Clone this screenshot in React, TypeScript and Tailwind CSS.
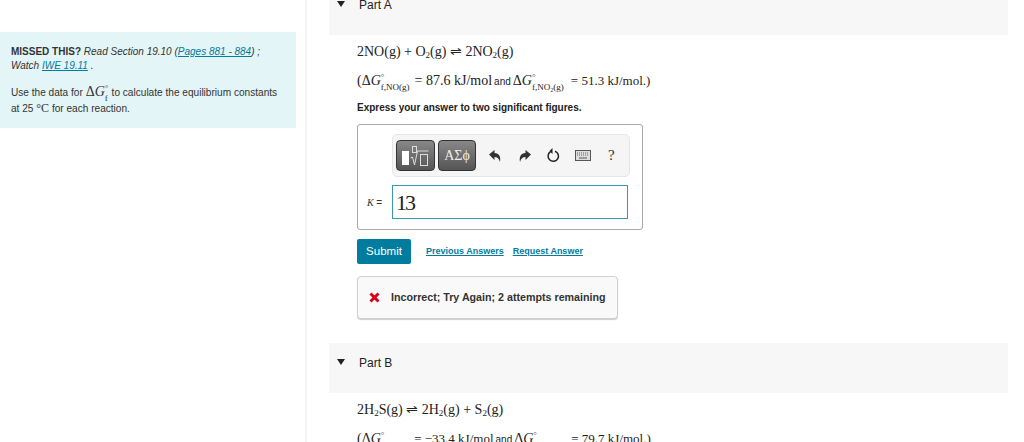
const sans = "font-['Liberation_Sans',Arial,sans-serif]";
const serif = "font-['Liberation_Serif','Times_New_Roman',serif]";

function DeltaG({ sub }: { sub: string }) {
  return (
    <span className={`inline-flex items-baseline leading-none ${serif}`}>
      <span>Δ</span>
      <i>G</i>
      <span className="relative inline-block h-[1px]">
        <span className="absolute left-0 top-[-1px] text-[9px] leading-none text-[#555]">°</span>
        <span className="relative top-[5px] whitespace-nowrap text-[9px] leading-none">{sub}</span>
      </span>
    </span>
  );
}

function PartHeader({ label }: { label: string }) {
  return (
    <div className="flex h-[50px] items-start bg-[#f7f7f7] pt-[10px]">
      <svg className="ml-[8px] mt-[6px] h-[6px] w-[8px]" viewBox="0 0 8 6">
        <path d="M0 0h8L4 6z" fill="#222" />
      </svg>
      <span className={`ml-[14px] text-[12px] leading-[20px] text-[#222] ${sans}`}>{label}</span>
    </div>
  );
}

function Toolbar() {
  return (
    <div className="ml-[34px] flex h-[43px] w-[238px] items-center rounded-[5px] border border-[#e6e6e6] bg-[#f5f5f5] pl-[3px]">
      <div className="flex h-[31px] w-[39px] items-center justify-center gap-[1px] rounded-[4px] border border-[#333] bg-gradient-to-b from-[#888] to-[#555]">
        <div className="mt-[5px] h-[14px] w-[7px] bg-white" />
        <svg width="19" height="22" viewBox="0 0 19 22" fill="none" stroke="#ddd" strokeWidth="1">
          <rect x="2.500" y="1.500" width="4" height="6" />
          <path d="M0.500 13l2 -1 2 8 3-14h11" />
          <rect x="10.500" y="9.500" width="7" height="11" />
        </svg>
      </div>
      <div className={`ml-[3px] flex h-[31px] w-[38px] items-center justify-center rounded-[4px] border border-[#333] bg-gradient-to-b from-[#888] to-[#555] text-[14px] text-[#eee] ${serif}`}>
        ΑΣϕ
      </div>
      <svg className="ml-[13px]" width="12" height="14" viewBox="0 0 12 14">
        <path d="M0 5.500L5.500 1v3c4.500 0 6.500 3.500 5.500 9-1-3.500-2.500-5-5.500-5v3z" fill="#333" />
      </svg>
      <svg className="ml-[18px]" width="12" height="14" viewBox="0 0 12 14">
        <path d="M12 5.500L6.500 1v3C2 4 0 7.500 1 13c1-3.500 2.500-5 5.500-5v3z" fill="#333" />
      </svg>
      <svg className="ml-[16px]" width="13" height="16" viewBox="0 0 13 16" fill="none">
        <path d="M8 3.200A5.200 5.200 0 1 1 3.500 3.700" stroke="#222" strokeWidth="1.500" />
        <path d="M5.500 0v6L2.500 3z" fill="#222" />
      </svg>
      <svg className="ml-[15px]" width="16" height="11" viewBox="0 0 16 11">
        <rect x="0.500" y="0.500" width="15" height="10" fill="#ddd" stroke="#555" />
        <path d="M2 3h12M2 5h12" stroke="#666" strokeDasharray="1 1" />
        <path d="M4 8h8" stroke="#555" />
      </svg>
      <span className={`ml-[17px] text-[15px] text-[#333] ${serif}`}>?</span>
    </div>
  );
}

export default function App() {
  return (
    <div className={`flex h-[442px] w-[1024px] overflow-hidden bg-white ${sans}`}>
      <aside className="w-[307px] shrink-0 border-r-2 border-[#f3f5f7] pt-[32px]">
        <div className="h-[96px] w-[296px] bg-[#e4f5f7] pl-[11px] pt-[13px] text-[10.1px] text-[#333]">
          <p className="leading-[14px]">
            <b className="text-[10px]">MISSED THIS?</b>{" "}
            <i className="text-[10px]">
              Read Section 19.10 (<span className="text-[#007c9e] underline">Pages 881 - 884</span>) ;
              <br />
              Watch <span className="text-[#007c9e] underline">IWE 19.11</span> .
            </i>
          </p>
          <p className="mt-[11px] leading-[16px]">
            Use the data for{" "}
            <span className="text-[14px] leading-none">
              <DeltaG sub="f" />
            </span>{" "}
            <span className="ml-[1px]">to calculate the equilibrium constants</span>
            <br />
            at 25 <span className={`text-[12px] leading-none ${serif}`}>°C</span> for each reaction.
          </p>
        </div>
      </aside>

      <main className="ml-[22px] mt-[-15px] w-[679px] shrink-0">
        <PartHeader label="Part A" />

        <div className="pl-[28px]">
          <p className={`mt-[9px] text-[14px] leading-[16px] text-[#222] ${serif}`}>
            2NO(g) + O<sub className="text-[9px]">2</sub>(g) ⇌ 2NO<sub className="text-[9px]">2</sub>(g)
          </p>
          <p className={`mt-[13px] text-[14px] leading-[16px] text-[#222] ${serif}`}>
            (<DeltaG sub="f,NO(g)" />
            <span className="ml-[5px]">= 87.6 kJ/mol</span>
            <span className={`mx-[2px] text-[10px] ${sans}`}>and</span>
            <DeltaG sub="f,NO₂(g)" />
            <span className="ml-[7px] text-[13px]">= 51.3 kJ/mol.)</span>
          </p>
          <p className="mt-[11px] text-[10px] font-bold leading-[14px] text-[#222]">
            Express your answer to two significant figures.
          </p>

          <div className="mt-[9px] h-[106px] w-[286px] rounded-[3px] border border-[#aaa] pt-[9px]">
            <Toolbar />
            <div className="mt-[8px] flex items-center">
              <span className={`ml-[9px] w-[25px] text-[10px] text-[#333] ${serif}`}>
                <i>K</i> <span className={sans}>=</span>
              </span>
              <div className={`flex h-[34px] w-[236px] items-center border border-[#3b97ad] pl-[3px] text-[22px] tracking-[-2px] text-[#222] ${serif}`}>
                13
              </div>
            </div>
          </div>

          <div className="mt-[9px] flex items-center">
            <div className="flex h-[25px] w-[54px] items-center justify-center rounded-[2px] bg-[#007c9e] text-[11.5px] text-white">
              Submit
            </div>
            <span className="ml-[15px] text-[9px] font-bold text-[#007c9e] underline">Previous Answers</span>
            <span className="ml-[9px] text-[9px] font-bold text-[#007c9e] underline">Request Answer</span>
          </div>

          <div className="mt-[12px] flex h-[43px] w-[261px] items-center rounded-[4px] border border-[#d0d0d0] bg-[#f9f9f9] pl-[11px] shadow-[0_1px_1px_rgba(0,0,0,0.2)]">
            <svg width="11" height="11" viewBox="0 0 11 11">
              <path d="M1.500 1.500l8 8M9.500 1.500l-8 8" stroke="#d9001b" strokeWidth="3" />
            </svg>
            <span className="ml-[11px] text-[10.700px] font-bold text-[#333]">Incorrect; Try Again; 2 attempts remaining</span>
          </div>
        </div>

        <div className="mt-[24px]">
          <PartHeader label="Part B" />
        </div>

        <div className="pl-[28px]">
          <p className={`mt-[9px] text-[14px] leading-[16px] text-[#222] ${serif}`}>
            2H<sub className="text-[9px]">2</sub>S(g) ⇌ 2H<sub className="text-[9px]">2</sub>(g) + S<sub className="text-[9px]">2</sub>(g)
          </p>
          <p className={`mt-[13px] text-[14px] leading-[16px] text-[#222] ${serif}`}>
            (<DeltaG sub="f,H₂S(g)" />
            <span className="ml-[3px] text-[13px]">= −33.4 kJ/mol</span>
            <span className={`mx-[2px] text-[10px] ${sans}`}>and</span>
            <DeltaG sub="f,S₂(g)" />
            <span className="ml-[14px] text-[13px]">= 79.7 kJ/mol.)</span>
          </p>
        </div>
      </main>
    </div>
  );
}
